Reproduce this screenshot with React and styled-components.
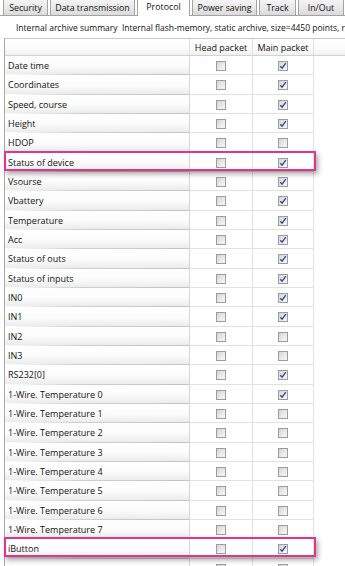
import React from "react";
import styled, { createGlobalStyle } from "styled-components";

const Global = createGlobalStyle`
  html, body { margin: 0; padding: 0; background: #ffffff; }
  body { font-family: "Open Sans", "Noto Sans", Arial, sans-serif; color: #111111; overflow: hidden; }
  #root { width: 345px; height: 566px; overflow: hidden; }
`;

const Page = styled.div`
  width: 345px;
  height: 566px;
  overflow: hidden;
  display: flex;
  flex-direction: column;
`;

const TabBar = styled.div`
  height: 15px;
  display: flex;
  align-items: stretch;
  gap: 2px;
  padding-left: 3px;
  border-bottom: 1px solid #a3a3a3;
  flex-shrink: 0;
`;

const Tab = styled.div`
  width: ${(p) => p.$w}px;
  flex-shrink: 0;
  box-sizing: border-box;
  display: flex;
  align-items: center;
  justify-content: center;
  font-size: 8.8px;
  white-space: nowrap;
  color: #111111;
  border: 1px solid #a3a3a3;
  border-top: none;
  border-bottom: none;
  background: ${(p) =>
    p.$active ? "#ffffff" : "linear-gradient(to bottom, #f4f4f4 0%, #e9e9e9 50%, #dadada 100%)"};
  margin-bottom: ${(p) => (p.$active ? "-1px" : "0")};
  padding-bottom: ${(p) => (p.$active ? "3px" : "0")};
`;

const Summary = styled.div`
  height: 12px;
  margin-top: 6px;
  padding-left: 16px;
  font-size: 8.5px;
  line-height: 12px;
  white-space: nowrap;
  overflow: hidden;
  color: #111111;
  flex-shrink: 0;
`;

const Table = styled.div`
  margin-top: 4px;
  margin-left: 4px;
  border-left: 1px solid #a9a9a9;
  display: flex;
  flex-direction: column;
`;

const HeaderRow = styled.div`
  height: 18px;
  box-sizing: border-box;
  display: grid;
  grid-template-columns: 185px 63px 61px 1fr;
  border-top: 1px solid #c8c8c8;
  border-bottom: 1px solid #d2d2d2;
  background: linear-gradient(to bottom, #ffffff 0%, #fbfbfb 60%, #f0f0f0 100%);
`;

const HeaderCell = styled.div`
  display: flex;
  align-items: center;
  justify-content: center;
  font-size: 9px;
  white-space: nowrap;
  color: #111111;
  border-right: ${(p) => (p.$last ? "none" : "1px solid #e0e0e0")};
`;

const Body = styled.div`
  display: grid;
  grid-template-columns: 185px 63px 61px;
  grid-auto-rows: 19.33px;
  width: 309px;
`;

const Row = styled.div`
  display: contents;
`;

const LabelCell = styled.div`
  position: relative;
  display: flex;
  align-items: center;
  padding-left: 3px;
  font-size: 9px;
  white-space: nowrap;
  color: #111111;
  box-sizing: border-box;
  background:
    linear-gradient(to right, #ffffff 0%, #cfcfcf 40%, #c4c4c4 100%) bottom / 100% 1px no-repeat,
    linear-gradient(to bottom, #ffffff 0%, #fcfcfc 50%, #eaeaea 100%);
  border-right: 1px solid #d6d6d6;

  ${(p) =>
    p.$hl &&
    `
    &::after {
      content: "";
      position: absolute;
      left: -1px;
      top: -2px;
      width: 312px;
      height: 20px;
      box-sizing: border-box;
      border: 2px solid #e2348a;
      box-shadow: 2px 3px 5px rgba(0, 0, 0, 0.35);
      pointer-events: none;
      z-index: 2;
    }
  `}
`;

const BoxCell = styled.div`
  display: flex;
  align-items: center;
  justify-content: center;
  background: #ffffff;
  box-sizing: border-box;
  border-right: 1px solid #e2e2e2;
  border-bottom: 1px solid #e2e2e2;
`;

const Box = styled.div`
  width: 10px;
  height: 10px;
  box-sizing: border-box;
  border: 1px solid #9c9c9c;
  background: linear-gradient(135deg, #d4d4d4 0%, #e8e8e8 50%, #f7f7f7 100%);
  display: flex;
  align-items: center;
  justify-content: center;
  position: relative;
  top: 1px;
`;

function Check({ checked }) {
  return (
    <Box>
      {checked ? (
        <svg width="8" height="8" viewBox="0 0 8 8">
          <path d="M1.3 4.2 L3.1 6.2 L6.8 1.2" fill="none" stroke="#2b4f9e" strokeWidth="1.4" />
        </svg>
      ) : null}
    </Box>
  );
}

const tabs = [
  ["Security", 45],
  ["Data transmission", 85],
  ["Protocol", 53, true],
  ["Power saving", 65],
  ["Track", 37],
  ["In/Out", 46],
];

const rows = [
  ["Date time", 1],
  ["Coordinates", 1],
  ["Speed, course", 1],
  ["Height", 1],
  ["HDOP", 0],
  ["Status of device", 1, true],
  ["Vsourse", 1],
  ["Vbattery", 1],
  ["Temperature", 1],
  ["Acc", 1],
  ["Status of outs", 1],
  ["Status of inputs", 1],
  ["IN0", 1],
  ["IN1", 1],
  ["IN2", 0],
  ["IN3", 0],
  ["RS232[0]", 1],
  ["1-Wire. Temperature 0", 1],
  ["1-Wire. Temperature 1", 0],
  ["1-Wire. Temperature 2", 0],
  ["1-Wire. Temperature 3", 0],
  ["1-Wire. Temperature 4", 0],
  ["1-Wire. Temperature 5", 0],
  ["1-Wire. Temperature 6", 0],
  ["1-Wire. Temperature 7", 0],
  ["iButton", 1, true],
  ["", 0],
];

export default function App() {
  return (
    <Page>
      <Global />
      <TabBar>
        {tabs.map(([t, w, a]) => (
          <Tab key={t} $w={w} $active={a}>
            {t}
          </Tab>
        ))}
      </TabBar>
      <Summary>
        Internal archive summary&nbsp;&nbsp;Internal flash-memory, static archive, size=4450 points, re
      </Summary>
      <Table>
        <HeaderRow>
          <HeaderCell />
          <HeaderCell>Head packet</HeaderCell>
          <HeaderCell>Main packet</HeaderCell>
          <HeaderCell $last />
        </HeaderRow>
        <Body>
          {rows.map(([label, main, hl], i) => (
            <Row key={i}>
              <LabelCell $hl={hl}>{label}</LabelCell>
              <BoxCell>
                <Check checked={false} />
              </BoxCell>
              <BoxCell>
                <Check checked={!!main} />
              </BoxCell>
            </Row>
          ))}
        </Body>
      </Table>
    </Page>
  );
}
